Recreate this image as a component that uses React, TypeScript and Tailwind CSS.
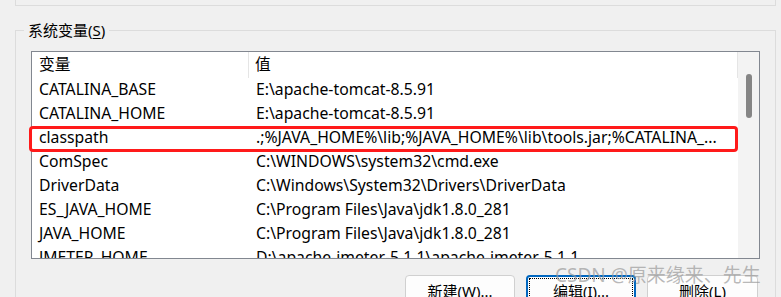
import React from "react";

interface EnvVar {
  name: string;
  value: string;
}

const vars: EnvVar[] = [
  { name: "CATALINA_BASE", value: "E:\\apache-tomcat-8.5.91" },
  { name: "CATALINA_HOME", value: "E:\\apache-tomcat-8.5.91" },
  {
    name: "classpath",
    value: ".;%JAVA_HOME%\\lib;%JAVA_HOME%\\lib\\tools.jar;%CATALINA_...",
  },
  { name: "ComSpec", value: "C:\\WINDOWS\\system32\\cmd.exe" },
  { name: "DriverData", value: "C:\\Windows\\System32\\Drivers\\DriverData" },
  { name: "ES_JAVA_HOME", value: "C:\\Program Files\\Java\\jdk1.8.0_281" },
  { name: "JAVA_HOME", value: "C:\\Program Files\\Java\\jdk1.8.0_281" },
  {
    name: "JMETER_HOME",
    value: "D:\\apache-jmeter-5.1.1\\apache-jmeter-5.1.1",
  },
];

const font = {
  fontFamily: '"Noto Sans", "Noto Sans CJK SC", sans-serif',
};

export default function App() {
  return (
    <div
      className="w-[781px] h-[297px] overflow-hidden bg-[#f0f0f0] text-black relative"
      style={font}
    >
      {/* bottom of the group above */}
      <div className="ml-[15px] w-[761px] h-[6px] border-x border-b border-[#dcdcdc]" />

      {/* 系统变量 group */}
      <fieldset className="ml-[15px] w-[761px] h-[300px] mt-[14px] border border-[#dcdcdc] pl-[15px] pr-[15px]">
        <legend className="ml-[-7px] px-[4px] text-[15px] leading-[20px]">
          系统变量(<span className="underline underline-offset-2">S</span>)
        </legend>

        <div className="relative mt-[11px] w-[729px] h-[208px] border border-[#828790] bg-white flex">
          <div className="flex-1 flex flex-col overflow-hidden text-[15.75px]">
            <div className="h-[26px] shrink-0 flex items-center">
              <div className="w-[217px] h-full pl-[7px] flex items-center border-r border-[#e5e5e5]">
                变量
              </div>
              <div className="flex-1 h-full pl-[6px] flex items-center border-r border-[#e5e5e5]">
                值
              </div>
            </div>
            {vars.map((v) => (
              <div key={v.name} className="h-[24px] shrink-0 flex items-center">
                <div className="w-[217px] pl-[7px] whitespace-nowrap">{v.name}</div>
                <div className="flex-1 pl-[7px] whitespace-nowrap">{v.value}</div>
              </div>
            ))}
          </div>

          {/* scrollbar */}
          <div className="w-[21px] h-full bg-[#f3f3f3] flex justify-center pt-[22px]">
            <div className="w-[6px] h-[44px] rounded-[3px] bg-[#858585]" />
          </div>

          {/* red highlight */}
          <div className="absolute left-[-3px] top-[74px] w-[709px] h-[26px] border-[3px] border-[#ff1a1a] rounded-[4px]" />
        </div>

        <div className="mt-[16px] ml-[374px] flex gap-[11px] text-[15px]">
          <button className="w-[110px] h-[32px] rounded-[4px] border border-[#d0d0d0] bg-[#fdfdfd] flex justify-center pt-[4px]">
            新建(W)...
          </button>
          <button className="w-[110px] h-[32px] rounded-[4px] border-2 border-[#0067c0] bg-[#fdfdfd] p-[1px]">
            <div className="w-full h-full border border-dotted border-black flex justify-center pt-[1px]">
              编辑(I)...
            </div>
          </button>
          <button className="w-[111px] h-[32px] rounded-[4px] border border-[#d0d0d0] bg-[#fdfdfd] flex justify-center pt-[4px]">
            删除(L)
          </button>
        </div>
      </fieldset>

      {/* watermark */}
      <div className="absolute left-[555px] top-[261px] text-[19px] text-[#9a9a9a]/70 whitespace-nowrap">
        CSDN @原来缘来、先生
      </div>
    </div>
  );
}
